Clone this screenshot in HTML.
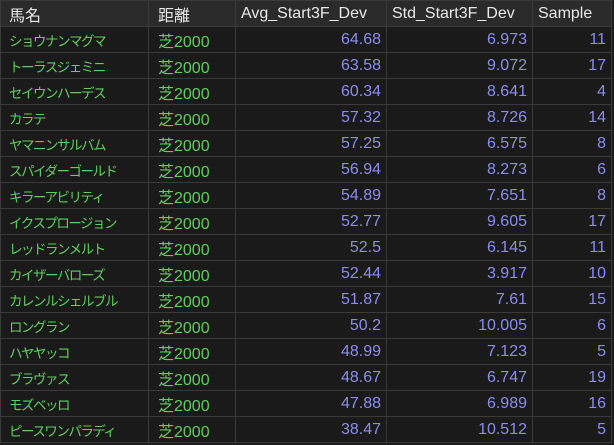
<html><head><style>
body{margin:0;background:#1c1c1c;width:614px;height:445px;overflow:hidden;font-family:"Liberation Sans","Noto Sans CJK JP",sans-serif;font-size:15px}
table{border-collapse:collapse;position:absolute;left:0;top:0;table-layout:fixed;width:612px}
tr{height:26px}
td,th{border:1px solid #3a3a3a;padding:0 5px;white-space:nowrap;overflow:hidden}
th{background:#2a2a2a;color:#e8e8e8;font-weight:normal;text-align:left}
td{background:#1a1a1a;color:#5fd05f}
td:first-child,th:first-child{padding-left:8px}
td:nth-child(2),th:nth-child(2){padding-left:9px}
.j{font-size:13.5px;letter-spacing:-1.5px}
td.n{color:#8c8cf0;text-align:right}
</style></head><body>
<table>
<colgroup><col style="width:148px"><col style="width:87px"><col style="width:151px"><col style="width:146px"><col style="width:79px"></colgroup>
<tr><th>馬名</th><th>距離</th><th>Avg_Start3F_Dev</th><th>Std_Start3F_Dev</th><th>Sample</th></tr>
<tr><td class="j">ショウナンマグマ</td><td>芝2000</td><td class="n">64.68</td><td class="n">6.973</td><td class="n">11</td></tr>
<tr><td class="j">トーラスジェミニ</td><td>芝2000</td><td class="n">63.58</td><td class="n">9.072</td><td class="n">17</td></tr>
<tr><td class="j">セイウンハーデス</td><td>芝2000</td><td class="n">60.34</td><td class="n">8.641</td><td class="n">4</td></tr>
<tr><td class="j">カラテ</td><td>芝2000</td><td class="n">57.32</td><td class="n">8.726</td><td class="n">14</td></tr>
<tr><td class="j">ヤマニンサルバム</td><td>芝2000</td><td class="n">57.25</td><td class="n">6.575</td><td class="n">8</td></tr>
<tr><td class="j">スパイダーゴールド</td><td>芝2000</td><td class="n">56.94</td><td class="n">8.273</td><td class="n">6</td></tr>
<tr><td class="j">キラーアビリティ</td><td>芝2000</td><td class="n">54.89</td><td class="n">7.651</td><td class="n">8</td></tr>
<tr><td class="j">イクスプロージョン</td><td>芝2000</td><td class="n">52.77</td><td class="n">9.605</td><td class="n">17</td></tr>
<tr><td class="j">レッドランメルト</td><td>芝2000</td><td class="n">52.5</td><td class="n">6.145</td><td class="n">11</td></tr>
<tr><td class="j">カイザーバローズ</td><td>芝2000</td><td class="n">52.44</td><td class="n">3.917</td><td class="n">10</td></tr>
<tr><td class="j">カレンルシェルブル</td><td>芝2000</td><td class="n">51.87</td><td class="n">7.61</td><td class="n">15</td></tr>
<tr><td class="j">ロングラン</td><td>芝2000</td><td class="n">50.2</td><td class="n">10.005</td><td class="n">6</td></tr>
<tr><td class="j">ハヤヤッコ</td><td>芝2000</td><td class="n">48.99</td><td class="n">7.123</td><td class="n">5</td></tr>
<tr><td class="j">ブラヴァス</td><td>芝2000</td><td class="n">48.67</td><td class="n">6.747</td><td class="n">19</td></tr>
<tr><td class="j">モズベッロ</td><td>芝2000</td><td class="n">47.88</td><td class="n">6.989</td><td class="n">16</td></tr>
<tr><td class="j">ピースワンパラディ</td><td>芝2000</td><td class="n">38.47</td><td class="n">10.512</td><td class="n">5</td></tr>
</table>
</body></html>
